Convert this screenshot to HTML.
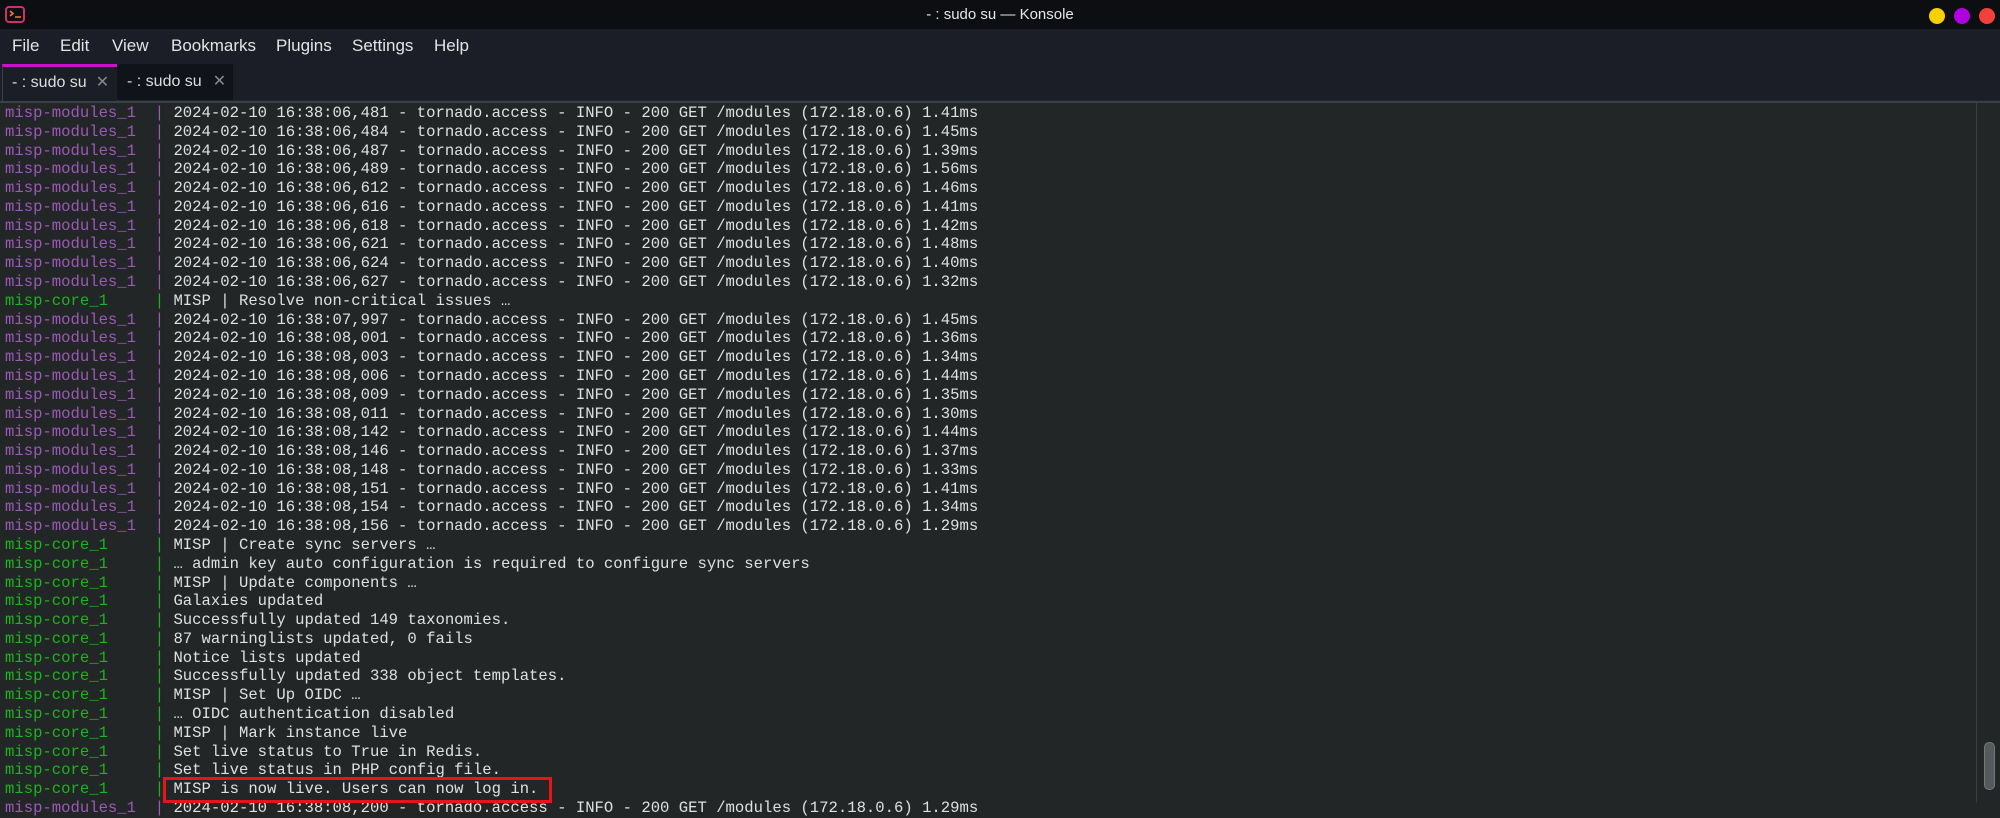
<!DOCTYPE html>
<html><head><meta charset="utf-8"><style>
html,body{margin:0;padding:0;width:2000px;height:801px;overflow:hidden;background:#232627;font-family:"Liberation Sans",sans-serif}
#title{position:absolute;left:0;top:0;width:2000px;height:29px;background:#0d0e12;color:#e6e6e6;font-size:15px;text-align:center;line-height:29px}
#menu{position:absolute;left:0;top:29px;width:2000px;height:71px;background:#1b1e27}
#menu span{position:absolute;top:8px;color:#e4e4e4;font-size:17px}
.tab{position:absolute;top:64px;height:35px;color:#dedede;font-size:16px;line-height:35px}
#term{position:absolute;left:0;top:101px;width:2000px;height:700px;background:#232627;border-top:2px solid #3b3f4a}
pre{margin:0;position:absolute;left:5px;top:1px;font-family:"Liberation Mono",monospace;font-size:15.6px;line-height:18.78px;color:#e0e0e0}
.m{color:#9b59b6}.c{color:#1cb41c}
</style></head><body>
<div id="title">- : sudo su — Konsole</div>
<svg style="position:absolute;left:5px;top:6px" width="20" height="17" viewBox="0 0 20 17"><rect x="1" y="1" width="18" height="15" rx="3" fill="none" stroke="#d0306a" stroke-width="2"/><path d="M5 5l3 2.5-3 2.5M10 11h6" stroke="#f08030" stroke-width="1.6" fill="none"/></svg>
<div style="position:absolute;left:1929px;top:8px;width:16px;height:16px;border-radius:50%;background:#f7d000"></div>
<div style="position:absolute;left:1954px;top:8px;width:16px;height:16px;border-radius:50%;background:#b000e0"></div>
<div style="position:absolute;left:1979px;top:8px;width:16px;height:16px;border-radius:50%;background:#f5403a"></div>
<div id="menu">
<span style="left:12px;top:7px">File</span><span style="left:60px;top:7px">Edit</span><span style="left:112px;top:7px">View</span><span style="left:171px;top:7px">Bookmarks</span><span style="left:276px;top:7px">Plugins</span><span style="left:352px;top:7px">Settings</span><span style="left:434px;top:7px">Help</span>
</div>
<div class="tab" style="left:2px;width:114px;background:#1b1e27;border-top:3px solid #d010c8;top:64px;height:34px;line-height:31px;border-right:1px solid #3b3f4a;border-left:1px solid #3b3f4a"><span style="margin-left:9px">- : sudo su</span><span style="margin-left:9px;color:#888">✕</span></div>
<div class="tab" style="left:117px;width:116px;background:#11131a;top:64px;height:36px;line-height:36px"><span style="margin-left:10px">- : sudo su</span><span style="margin-left:11px;color:#888">✕</span></div>
<div id="term">
<pre><span class="m">misp-modules_1  |</span> 2024-02-10 16:38:06,481 - tornado.access - INFO - 200 GET /modules (172.18.0.6) 1.41ms
<span class="m">misp-modules_1  |</span> 2024-02-10 16:38:06,484 - tornado.access - INFO - 200 GET /modules (172.18.0.6) 1.45ms
<span class="m">misp-modules_1  |</span> 2024-02-10 16:38:06,487 - tornado.access - INFO - 200 GET /modules (172.18.0.6) 1.39ms
<span class="m">misp-modules_1  |</span> 2024-02-10 16:38:06,489 - tornado.access - INFO - 200 GET /modules (172.18.0.6) 1.56ms
<span class="m">misp-modules_1  |</span> 2024-02-10 16:38:06,612 - tornado.access - INFO - 200 GET /modules (172.18.0.6) 1.46ms
<span class="m">misp-modules_1  |</span> 2024-02-10 16:38:06,616 - tornado.access - INFO - 200 GET /modules (172.18.0.6) 1.41ms
<span class="m">misp-modules_1  |</span> 2024-02-10 16:38:06,618 - tornado.access - INFO - 200 GET /modules (172.18.0.6) 1.42ms
<span class="m">misp-modules_1  |</span> 2024-02-10 16:38:06,621 - tornado.access - INFO - 200 GET /modules (172.18.0.6) 1.48ms
<span class="m">misp-modules_1  |</span> 2024-02-10 16:38:06,624 - tornado.access - INFO - 200 GET /modules (172.18.0.6) 1.40ms
<span class="m">misp-modules_1  |</span> 2024-02-10 16:38:06,627 - tornado.access - INFO - 200 GET /modules (172.18.0.6) 1.32ms
<span class="c">misp-core_1     |</span> MISP | Resolve non-critical issues …
<span class="m">misp-modules_1  |</span> 2024-02-10 16:38:07,997 - tornado.access - INFO - 200 GET /modules (172.18.0.6) 1.45ms
<span class="m">misp-modules_1  |</span> 2024-02-10 16:38:08,001 - tornado.access - INFO - 200 GET /modules (172.18.0.6) 1.36ms
<span class="m">misp-modules_1  |</span> 2024-02-10 16:38:08,003 - tornado.access - INFO - 200 GET /modules (172.18.0.6) 1.34ms
<span class="m">misp-modules_1  |</span> 2024-02-10 16:38:08,006 - tornado.access - INFO - 200 GET /modules (172.18.0.6) 1.44ms
<span class="m">misp-modules_1  |</span> 2024-02-10 16:38:08,009 - tornado.access - INFO - 200 GET /modules (172.18.0.6) 1.35ms
<span class="m">misp-modules_1  |</span> 2024-02-10 16:38:08,011 - tornado.access - INFO - 200 GET /modules (172.18.0.6) 1.30ms
<span class="m">misp-modules_1  |</span> 2024-02-10 16:38:08,142 - tornado.access - INFO - 200 GET /modules (172.18.0.6) 1.44ms
<span class="m">misp-modules_1  |</span> 2024-02-10 16:38:08,146 - tornado.access - INFO - 200 GET /modules (172.18.0.6) 1.37ms
<span class="m">misp-modules_1  |</span> 2024-02-10 16:38:08,148 - tornado.access - INFO - 200 GET /modules (172.18.0.6) 1.33ms
<span class="m">misp-modules_1  |</span> 2024-02-10 16:38:08,151 - tornado.access - INFO - 200 GET /modules (172.18.0.6) 1.41ms
<span class="m">misp-modules_1  |</span> 2024-02-10 16:38:08,154 - tornado.access - INFO - 200 GET /modules (172.18.0.6) 1.34ms
<span class="m">misp-modules_1  |</span> 2024-02-10 16:38:08,156 - tornado.access - INFO - 200 GET /modules (172.18.0.6) 1.29ms
<span class="c">misp-core_1     |</span> MISP | Create sync servers …
<span class="c">misp-core_1     |</span> … admin key auto configuration is required to configure sync servers
<span class="c">misp-core_1     |</span> MISP | Update components …
<span class="c">misp-core_1     |</span> Galaxies updated
<span class="c">misp-core_1     |</span> Successfully updated 149 taxonomies.
<span class="c">misp-core_1     |</span> 87 warninglists updated, 0 fails
<span class="c">misp-core_1     |</span> Notice lists updated
<span class="c">misp-core_1     |</span> Successfully updated 338 object templates.
<span class="c">misp-core_1     |</span> MISP | Set Up OIDC …
<span class="c">misp-core_1     |</span> … OIDC authentication disabled
<span class="c">misp-core_1     |</span> MISP | Mark instance live
<span class="c">misp-core_1     |</span> Set live status to True in Redis.
<span class="c">misp-core_1     |</span> Set live status in PHP config file.
<span class="c">misp-core_1     |</span> MISP is now live. Users can now log in.
<span class="m">misp-modules_1  |</span> 2024-02-10 16:38:08,200 - tornado.access - INFO - 200 GET /modules (172.18.0.6) 1.29ms</pre>
<div style="position:absolute;left:163px;top:674px;width:383px;height:20px;border:3px solid #e8141c"></div>
<div style="position:absolute;left:1976px;top:0;width:1px;height:700px;background:#3a3e44"></div>
<div style="position:absolute;left:1984px;top:639px;width:9px;height:46px;border-radius:5px;background:#555a5e;border:1px solid #777"></div>
</div>
</body></html>
